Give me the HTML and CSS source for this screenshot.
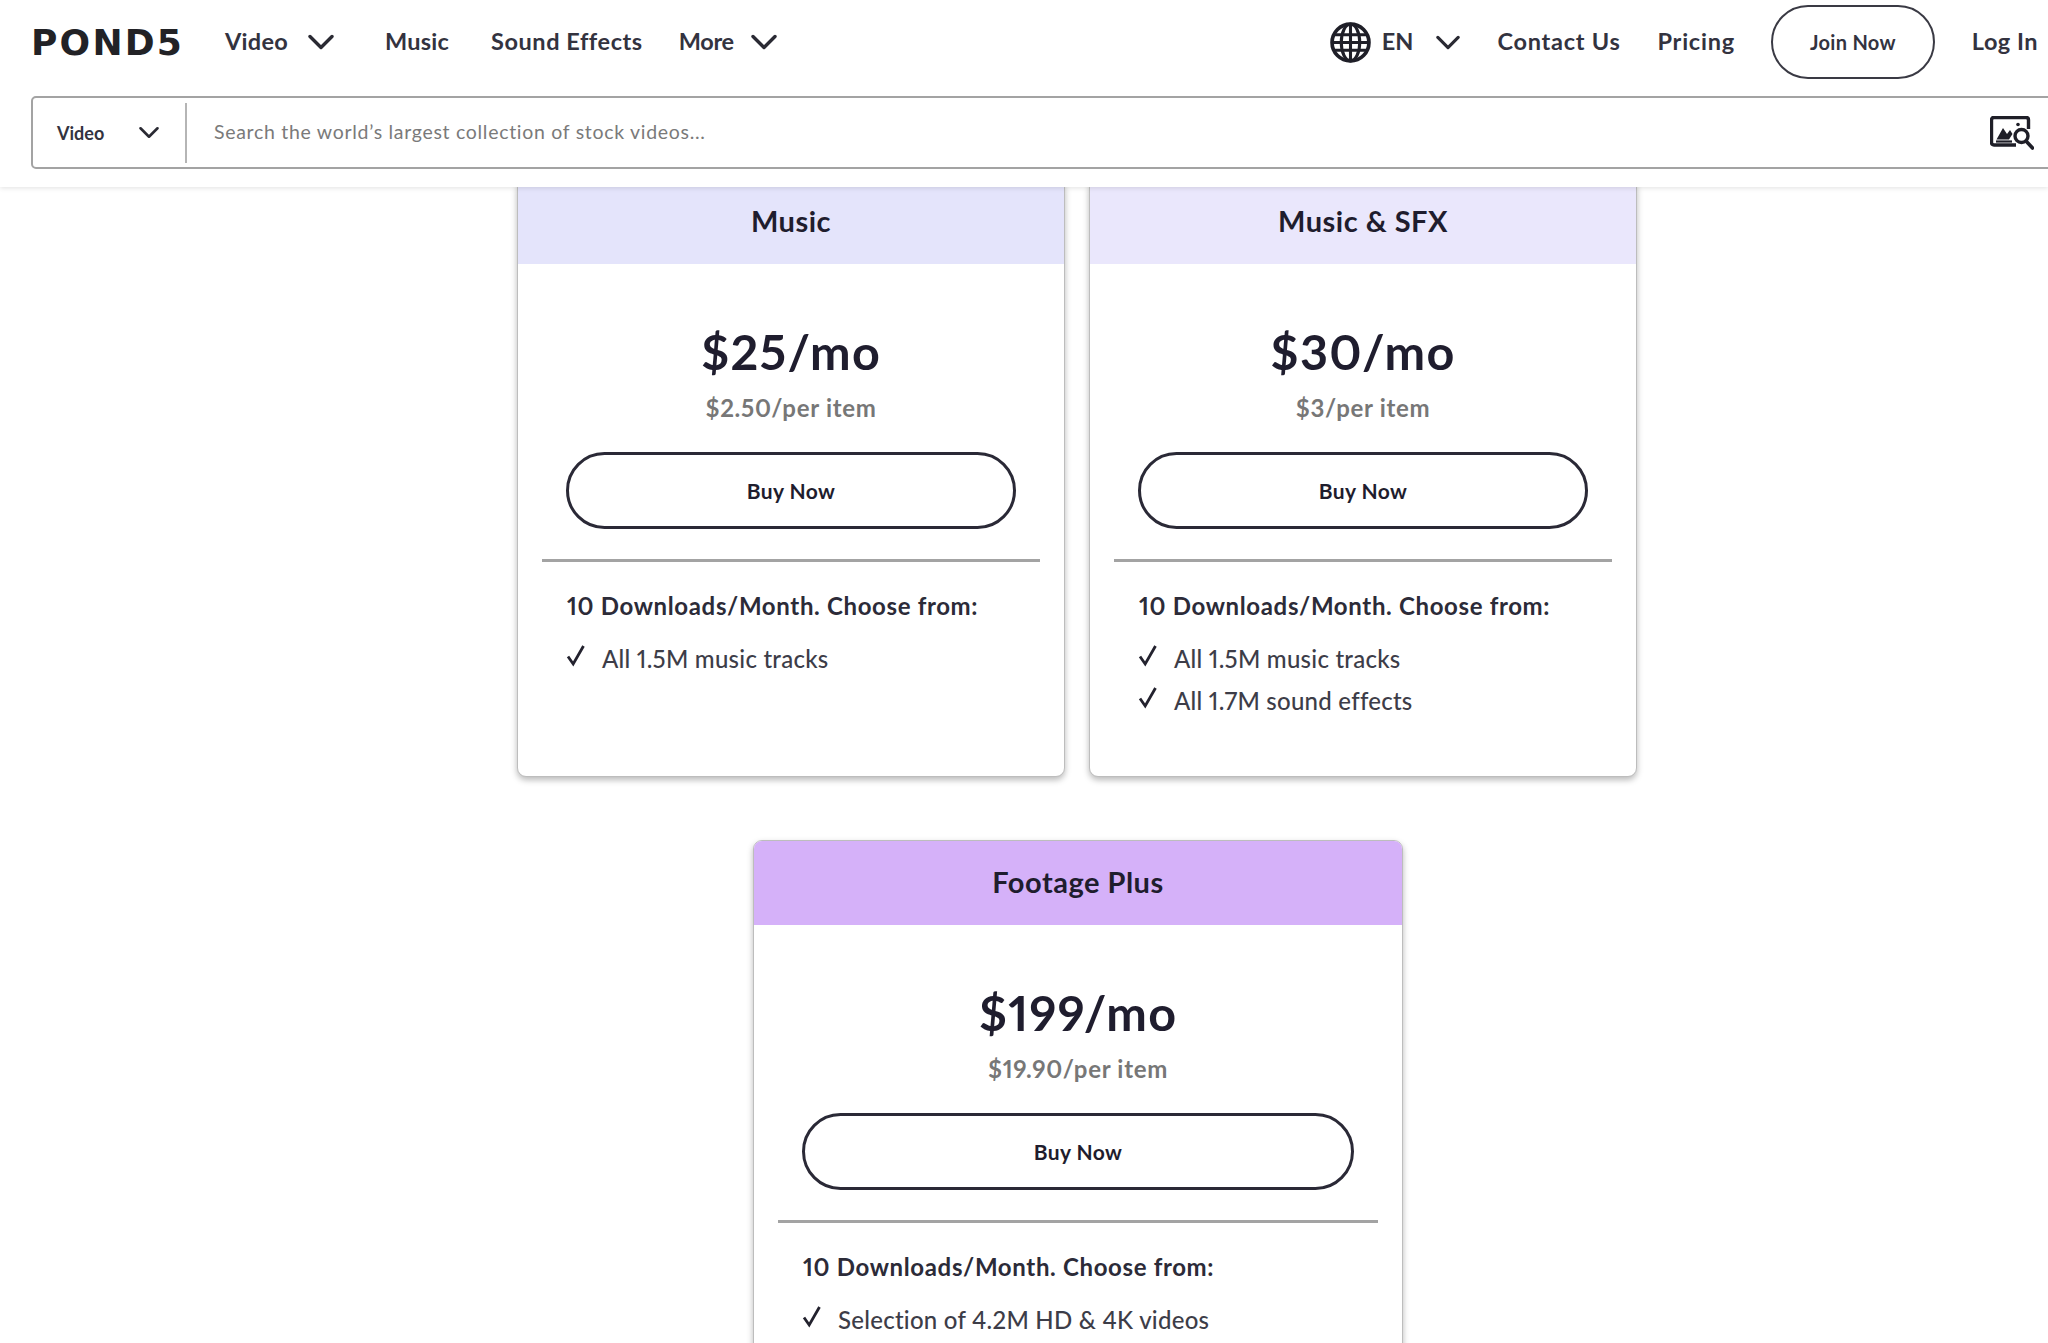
FILE: index.html
```html
<!DOCTYPE html>
<html lang="en">
<head>
<meta charset="utf-8">
<title>Pond5 Pricing</title>
<link rel="stylesheet" href="styles.css">
</head>
<body>
<svg class="defs" width="0" height="0" aria-hidden="true">
  <symbol id="chev" viewBox="0 0 26 16"><path d="M2 2.5 13 13.5 24 2.5" fill="none" stroke="currentColor" stroke-width="3.4" stroke-linecap="round" stroke-linejoin="round"/></symbol>
  <symbol id="tick" viewBox="0 0 20 24"><path d="M2 12.5 7.200 20 17.500 2" fill="none" stroke="currentColor" stroke-width="2.800" stroke-linejoin="miter"/></symbol>
</svg>
<header class="site-header">
  <nav class="nav">
    <a class="logo">POND5</a>
    <a class="nav-link first">Video</a><svg class="chev"><use href="#chev"/></svg>
    <a class="nav-link music">Music</a>
    <a class="nav-link sfx">Sound Effects</a>
    <a class="nav-link more">More</a><svg class="chev"><use href="#chev"/></svg>
    <div class="nav-right">
      <svg class="globe" viewBox="0 0 40 40" aria-hidden="true">
        <circle cx="20" cy="20" r="18" fill="none" stroke="#1f1f28" stroke-width="3.600"/>
        <ellipse cx="20" cy="20" rx="9" ry="18" fill="none" stroke="#1f1f28" stroke-width="3"/>
        <path d="M20 2V38M4 12.500H36M2 20H38M4 27.500H36" fill="none" stroke="#1f1f28" stroke-width="3"/>
      </svg>
      <a class="nav-link lang">EN</a><svg class="chev"><use href="#chev"/></svg>
      <a class="nav-link contact">Contact Us</a>
      <a class="nav-link pricing">Pricing</a>
      <a class="join">Join Now</a>
      <a class="nav-link login">Log In</a>
    </div>
  </nav>
  <div class="search">
    <div class="search-type"><span>Video</span><svg class="chev small"><use href="#chev"/></svg></div>
    <div class="search-text">Search the world’s largest collection of stock videos...</div>
    <svg class="visual-search" viewBox="0 0 44 34" aria-hidden="true">
      <path d="M26 29H4Q1.500 29 1.500 26.500V4Q1.500 1.500 4 1.500H36Q38.500 1.500 38.500 4V13" fill="none" stroke="#1f1f28" stroke-width="3.400"/>
      <path d="M6.500 23.500 13 12 17 18 20 14 22.500 18 19 23.500Z" fill="#1f1f28"/>
      <path d="M6 25.500H22" stroke="#1f1f28" stroke-width="2.200"/>
      <circle cx="28" cy="8.500" r="1.800" fill="#1f1f28"/>
      <circle cx="31.500" cy="20" r="6.500" fill="none" stroke="#1f1f28" stroke-width="3.400"/>
      <path d="M36 25 42.500 32" stroke="#1f1f28" stroke-width="3.600" stroke-linecap="round"/>
    </svg>
  </div>
</header>
<main class="plans">
  <div class="plan-row">
    <section class="plan">
      <h2 class="plan-head head-music">Music</h2>
      <div class="plan-body">
        <p class="price">$25/mo</p>
        <p class="per">$2.50/per item</p>
        <a class="buy">Buy Now</a>
      </div>
      <hr class="rule">
      <div class="features">
        <p class="choose">10 Downloads/Month. Choose from:</p>
        <ul>
          <li><svg class="tick"><use href="#tick"/></svg>All 1.5M music tracks</li>
        </ul>
      </div>
    </section>
    <section class="plan">
      <h2 class="plan-head head-sfx">Music &amp; SFX</h2>
      <div class="plan-body">
        <p class="price">$30/mo</p>
        <p class="per">$3/per item</p>
        <a class="buy">Buy Now</a>
      </div>
      <hr class="rule">
      <div class="features">
        <p class="choose">10 Downloads/Month. Choose from:</p>
        <ul>
          <li><svg class="tick"><use href="#tick"/></svg>All 1.5M music tracks</li>
          <li><svg class="tick"><use href="#tick"/></svg>All 1.7M sound effects</li>
        </ul>
      </div>
    </section>
  </div>
  <div class="plan-row">
    <section class="plan wide">
      <h2 class="plan-head head-plus">Footage Plus</h2>
      <div class="plan-body">
        <p class="price">$199/mo</p>
        <p class="per">$19.90/per item</p>
        <a class="buy">Buy Now</a>
      </div>
      <hr class="rule">
      <div class="features">
        <p class="choose">10 Downloads/Month. Choose from:</p>
        <ul>
          <li><svg class="tick"><use href="#tick"/></svg>Selection of 4.2M HD &amp; 4K videos</li>
        </ul>
      </div>
    </section>
  </div>
</main>
</body>
</html>
```
FILE: styles.css
```css
* { box-sizing: border-box; }
html, body { height: 1343px; overflow: hidden; }
body {
  margin: 0;
  background: #fff;
  color: #1f1d2e;
  font-family: "Lato", "Open Sans", sans-serif;
  font-variant-numeric: proportional-nums;
}
.defs { position: absolute; }
p, h2, ul { margin: 0; padding: 0; }
ul { list-style: none; }

.site-header {
  position: relative;
  z-index: 2;
  height: 187px;
  background: #fff;
  box-shadow: 0 1px 5px rgba(0, 0, 0, .12);
  overflow: hidden;
}
.nav {
  display: flex;
  align-items: center;
  height: 84px;
  padding: 0 10px 0 31px;
  margin-bottom: 12px;
}
.logo {
  font-family: "DejaVu Sans", sans-serif;
  font-size: 36px;
  font-weight: 700;
  letter-spacing: 2.200px;
  width: 194px;
  color: #222226;
}
.nav-link {
  padding-bottom: 2px;
  font-size: 23.500px;
  font-weight: 700;
  letter-spacing: .25px;
  color: #33333f;
  white-space: nowrap;
}
.chev { width: 26px; height: 16px; color: #2a2a33; flex: none; margin-left: 20px; }
.chev.small { width: 20px; height: 13px; margin-left: 0; }
.music { margin-left: 51px; }
.sfx { margin-left: 42px; letter-spacing: .55px; }
.more { margin-left: 36px; letter-spacing: -.3px; }
.more + .chev { margin-left: 17px; }
.nav-right { margin-left: auto; display: flex; align-items: center; }
.nav-right .nav-link { letter-spacing: .75px; }
.globe { width: 41px; height: 41px; margin-right: 11px; }
.nav-right .lang { letter-spacing: 0; }
.lang + .chev { width: 24px; height: 15px; margin-left: 23px; }
.contact { margin-left: 37px; }
.pricing { margin-left: 37px; }
.join {
  margin-left: 36px;
  width: 164px;
  height: 74px;
  border: 2.500px solid #3a3a44;
  border-radius: 37px;
  display: flex;
  align-items: center;
  justify-content: center;
  font-size: 20px;
  font-weight: 700;
  letter-spacing: .3px;
  color: #33333f;
}
.nav-right .login { margin-left: 37px; letter-spacing: .5px; }

.search {
  display: flex;
  align-items: center;
  height: 73px;
  margin: 0 -10px 0 31px;
  padding: 0 22px 0 0;
  border: 2px solid #a3a3a3;
  border-radius: 5px;
}
.search-type {
  width: 154px;
  height: 60px;
  flex: none;
  display: flex;
  align-items: center;
  justify-content: space-between;
  padding: 0 26px 0 24px;
  border-right: 2px solid #b5b5b5;
  font-size: 18px;
  font-weight: 700;
  color: #33333f;
}
.search-text {
  flex: 1;
  padding: 0 0 2px 27px;
  font-size: 19.500px;
  letter-spacing: .7px;
  color: #7a7a7a;
}
.visual-search { width: 44px; height: 34px; flex: none; }

.plans {
  margin-top: -8px;
  padding-left: 106px;
  display: flex;
  flex-direction: column;
  gap: 63px;
}
.plan-row { display: flex; justify-content: center; gap: 24px; }
.plan {
  width: 548px;
  height: 598px;
  background: #fff;
  border: 1px solid #bdbdbd;
  border-radius: 9px;
  box-shadow: 0 3px 6px rgba(0, 0, 0, .28);
  overflow: hidden;
}
.plan.wide { width: 650px; height: auto; min-height: 700px; margin-left: 2px; }
.plan-head {
  height: 84px;
  padding-bottom: 4px;
  display: flex;
  align-items: center;
  justify-content: center;
  font-size: 29px;
  font-weight: 700;
  letter-spacing: .5px;
}
.head-music { background: #e4e4fb; }
.head-sfx { background: #eae7fc; }
.head-plus { background: #d5b1f9; }
.plan-body {
  padding: 0 48px;
  display: flex;
  flex-direction: column;
  align-items: center;
}
.price {
  margin-top: 59px;
  font-size: 48.500px;
  font-weight: 700;
  line-height: 56px;
  letter-spacing: 1.300px;
}
.per {
  margin-top: 14px;
  font-size: 24px;
  font-weight: 700;
  line-height: 30px;
  letter-spacing: .7px;
  color: #777;
}
.buy {
  margin-top: 29px;
  width: 100%;
  height: 77px;
  border: 3px solid #2a2936;
  border-radius: 39px;
  display: flex;
  align-items: center;
  justify-content: center;
  font-size: 21px;
  font-weight: 700;
  letter-spacing: .4px;
}
.rule {
  margin: 30px 24px 0;
  height: 3px;
  border: 0;
  background: #a3a3a3;
}
.features { padding: 29px 48px 0 49px; }
.choose {
  font-size: 24px;
  font-weight: 700;
  line-height: 30px;
  letter-spacing: .65px;
  color: #2c2b38;
}
.features ul { margin-top: 23px; display: flex; flex-direction: column; gap: 12px; }
.features li {
  display: flex;
  align-items: center;
  font-size: 24px;
  font-weight: 500;
  line-height: 30px;
  letter-spacing: .25px;
  color: #3d3d48;
}
.tick {
  width: 20px;
  height: 24px;
  margin: -7px 16px 0 -1px;
  color: #23222e;
  flex: none;
}
```
